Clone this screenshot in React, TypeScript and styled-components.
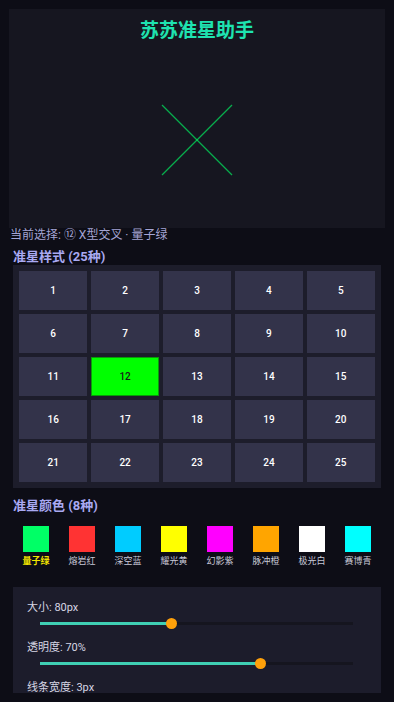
import { useState } from "react";
import styled, { createGlobalStyle } from "styled-components";

const GlobalStyle = createGlobalStyle`
  html, body {
    margin: 0;
    padding: 0;
    background: #0d0d16;
    font-family: Roboto, "Noto Sans CJK SC", sans-serif;
  }
`;

const Frame = styled.div`
  height: 100vh;
  box-sizing: border-box;
  padding: 9px;
`;

const Scroller = styled.div`
  height: 100%;
  overflow-y: auto;
  scrollbar-width: none;
  &::-webkit-scrollbar {
    display: none;
  }
`;

const Preview = styled.div`
  height: 219px;
  background: #161620;
  display: flex;
  flex-direction: column;
  align-items: center;
`;

const Title = styled.h1`
  margin: 0;
  padding-top: 10px;
  font-size: 19px;
  line-height: 23px;
  font-weight: 700;
  color: #1ee3b0;
`;

const Canvas = styled.div`
  flex: 1;
  padding-top: 10px;
  display: flex;
  align-items: center;
  justify-content: center;
`;

const Current = styled.div`
  font-size: 12px;
  line-height: 14px;
  color: #a4a4d4;
  padding-left: 1px;
`;

const Section = styled.div`
  margin: 0 4px;
`;

const SectionTitle = styled.div<{ $gap?: number }>`
  margin-top: ${(p) => p.$gap ?? 7}px;
  font-size: 13px;
  line-height: 16px;
  font-weight: 700;
  color: #a9a9f2;
`;

const Grid = styled.div`
  background: #1d1d2b;
  padding: 6px;
  display: grid;
  grid-template-columns: repeat(5, 1fr);
  grid-auto-rows: 39px;
  column-gap: 3.5px;
  row-gap: 4px;
`;

const Cell = styled.button<{ $active: boolean }>`
  border: 1px solid ${(p) => (p.$active ? "#0a9a0a" : "transparent")};
  background: ${(p) => (p.$active ? "#00ff00" : "#33334a")};
  color: ${(p) => (p.$active ? "#1a1a1a" : "#ffffff")};
  font-family: Roboto, sans-serif;
  font-size: 10px;
  font-weight: 500;
  padding: 0;
  cursor: pointer;
`;

const Swatches = styled.div`
  margin-top: 12px;
  display: grid;
  grid-template-columns: repeat(8, 1fr);
`;

const SwatchItem = styled.div`
  display: flex;
  flex-direction: column;
  align-items: center;
  cursor: pointer;
`;

const Swatch = styled.div<{ $color: string }>`
  width: 26px;
  height: 26px;
  background: ${(p) => p.$color};
`;

const SwatchLabel = styled.div<{ $active: boolean }>`
  margin-top: 3px;
  font-size: 9px;
  line-height: 12px;
  color: ${(p) => (p.$active ? "#f2e400" : "#c8c8d6")};
  font-weight: ${(p) => (p.$active ? 700 : 400)};
`;

const Controls = styled.div`
  margin: 20px 4px 0;
  background: #1c1c2b;
  padding: 14px 14px 10px;
`;

const ControlLabel = styled.div`
  font-size: 11px;
  line-height: 14px;
  color: #d6d6e4;
`;

const SliderRow = styled.div`
  position: relative;
  height: 16px;
  margin: 0 14px 10px 13px;
  display: flex;
  align-items: center;
`;

const Track = styled.div`
  position: relative;
  width: 100%;
  height: 3px;
  background: #15151f;
`;

const Fill = styled.div`
  height: 100%;
  background: #3fcfb4;
`;

const Thumb = styled.div`
  position: absolute;
  top: 50%;
  width: 11px;
  height: 11px;
  margin: -5.5px 0 0 -5.5px;
  border-radius: 50%;
  background: #ffa10a;
`;

const colors = [
  { name: "量子绿", value: "#00ff66" },
  { name: "熔岩红", value: "#ff3333" },
  { name: "深空蓝", value: "#00ccff" },
  { name: "耀光黄", value: "#ffff00" },
  { name: "幻影紫", value: "#ff00ff" },
  { name: "脉冲橙", value: "#ffa500" },
  { name: "极光白", value: "#ffffff" },
  { name: "赛博青", value: "#00ffff" },
];

const Slider = ({ label, ratio }: { label: string; ratio: number }) => (
  <>
    <ControlLabel>{label}</ControlLabel>
    <SliderRow>
      <Track>
        <Fill style={{ width: `${ratio * 100}%` }} />
        <Thumb style={{ left: `${ratio * 100}%` }} />
      </Track>
    </SliderRow>
  </>
);

export default function App() {
  const [style, setStyle] = useState(12);
  const [color, setColor] = useState(0);

  return (
    <>
      <GlobalStyle />
      <Frame>
        <Scroller>
          <Preview>
            <Title>苏苏准星助手</Title>
            <Canvas>
              <svg width="72" height="72" viewBox="0 0 72 72">
                <g stroke={colors[color].value} strokeOpacity="0.65" strokeWidth="1.3">
                  <line x1="1" y1="1" x2="71" y2="71" />
                  <line x1="71" y1="1" x2="1" y2="71" />
                </g>
              </svg>
            </Canvas>
          </Preview>
          <Current>当前选择: ⑫ X型交叉 · {colors[color].name}</Current>
          <Section>
            <SectionTitle>准星样式 (25种)</SectionTitle>
            <Grid>
              {Array.from({ length: 25 }, (_, i) => i + 1).map((n) => (
                <Cell key={n} $active={n === style} onClick={() => setStyle(n)}>
                  {n}
                </Cell>
              ))}
            </Grid>
            <SectionTitle $gap={10}>准星颜色 (8种)</SectionTitle>
            <Swatches>
              {colors.map((c, i) => (
                <SwatchItem key={c.name} onClick={() => setColor(i)}>
                  <Swatch $color={c.value} />
                  <SwatchLabel $active={i === color}>{c.name}</SwatchLabel>
                </SwatchItem>
              ))}
            </Swatches>
          </Section>
          <Controls>
            <Slider label="大小: 80px" ratio={0.42} />
            <Slider label="透明度: 70%" ratio={0.703} />
            <Slider label="线条宽度: 3px" ratio={0.25} />
          </Controls>
        </Scroller>
      </Frame>
    </>
  );
}
